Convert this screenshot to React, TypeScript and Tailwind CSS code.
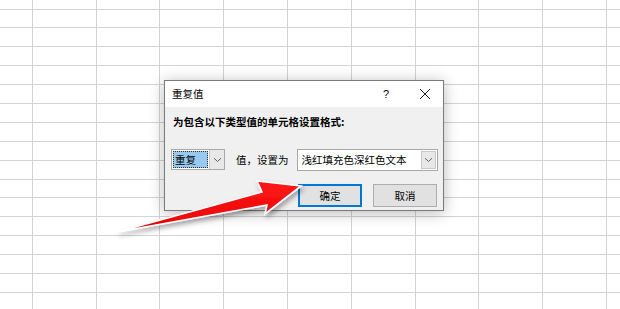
const cols = [33, 64, 63, 64, 64, 64, 64, 63, 64, 64, 64];
const rowCount = 17;

function Sheet() {
  return (
    <div className="flex flex-col">
      <div className="flex h-[9.5px] shrink-0">
        {cols.map((w, i) => (
          <div key={i} style={{ width: w }} className="shrink-0 border-r border-b border-[#d3d3d3]" />
        ))}
      </div>
      {Array.from({ length: rowCount }).map((_, r) => (
        <div key={r} className="flex h-[18.9px] shrink-0">
          {cols.map((w, i) => (
            <div key={i} style={{ width: w }} className="shrink-0 border-r border-b border-[#d3d3d3]" />
          ))}
        </div>
      ))}
    </div>
  );
}

function Chevron() {
  return (
    <svg width="9" height="6" viewBox="0 0 9 6" fill="none">
      <path d="M1 1.2 L4.5 4.5 L8 1.2" stroke="#606060" strokeWidth="1" />
    </svg>
  );
}

function Dialog() {
  return (
    <div className="absolute left-[164px] top-[80px] w-[280px] h-[131px] border border-[#7a7a7a] bg-[#f0f0f0] shadow-[0_2px_14px_rgba(0,0,0,0.28)] flex flex-col text-[10.5px] text-black whitespace-nowrap">
      <div className="h-[26px] bg-white flex items-center pl-[7px] pr-[12px] shrink-0">
        <span>重复值</span>
        <span className="ml-auto mr-[30px] text-[11px] font-['Liberation_Sans',sans-serif]">?</span>
        <svg width="12" height="12" viewBox="0 0 12 12">
          <path d="M1 1 L11 11 M11 1 L1 11" stroke="#222" strokeWidth="1" />
        </svg>
      </div>
      <div className="flex flex-col pl-[6px] pr-[6px]">
        <div className="mt-[8px] font-bold pl-[2px] leading-[14px]">为包含以下类型值的单元格设置格式:</div>
        <div className="flex items-center mt-[20px] h-[21px]">
          <div className="flex shrink-0 h-[21px] w-[54px] border border-[#a8a8a8] bg-white">
            <div className="flex-1 p-[1px]">
              <div className="h-full bg-[#99c9ef] border border-dotted border-[#333] flex items-center pl-[1px]">重复</div>
            </div>
            <div className="w-[15px] bg-[#e8e8e8] border-l border-[#c8c8c8] flex items-center justify-center">
              <Chevron />
            </div>
          </div>
          <span className="ml-[11px] shrink-0">值，设置为</span>
          <div className="ml-[8px] flex shrink-0 h-[22px] w-[141px] border border-[#a8a8a8] bg-white">
            <div className="flex-1 flex items-center pl-[4px]">浅红填充色深红色文本</div>
            <div className="w-[15px] my-[1px] mr-[1px] bg-[#e8e8e8] border border-[#c8c8c8] flex items-center justify-center">
              <Chevron />
            </div>
          </div>
        </div>
        <div className="flex justify-end mt-[14px] gap-[11px]">
          <div className="w-[64px] h-[23px] bg-[#e1e1e1] border-2 border-[#0078d7] flex items-center justify-center">确定</div>
          <div className="w-[64px] h-[23px] bg-[#e1e1e1] border border-[#adadad] flex items-center justify-center">取消</div>
        </div>
      </div>
    </div>
  );
}

function Arrow() {
  return (
    <svg className="absolute left-0 top-0 pointer-events-none" width="620" height="309" viewBox="0 0 620 309">
      <defs>
        <filter id="sh" x="-20%" y="-50%" width="140%" height="200%">
          <feDropShadow dx="2" dy="3" stdDeviation="2.5" floodColor="#000" floodOpacity="0.35" />
        </filter>
        <linearGradient id="rg" x1="0" y1="0" x2="0" y2="1">
          <stop offset="0" stopColor="#ff1a1a" />
          <stop offset="1" stopColor="#e60000" />
        </linearGradient>
      </defs>
      <polygon
        points="117,232 262,192 257,181 301,186 265,214 267,205"
        fill="url(#rg)"
        stroke="#ffffff"
        strokeWidth="1.6"
        strokeLinejoin="miter"
        filter="url(#sh)"
      />
    </svg>
  );
}

export default function App() {
  return (
    <div className="relative w-[620px] h-[309px] overflow-hidden bg-white font-['Noto_Sans_CJK_SC','Microsoft_YaHei',sans-serif]">
      <Sheet />
      <Dialog />
      <Arrow />
    </div>
  );
}
